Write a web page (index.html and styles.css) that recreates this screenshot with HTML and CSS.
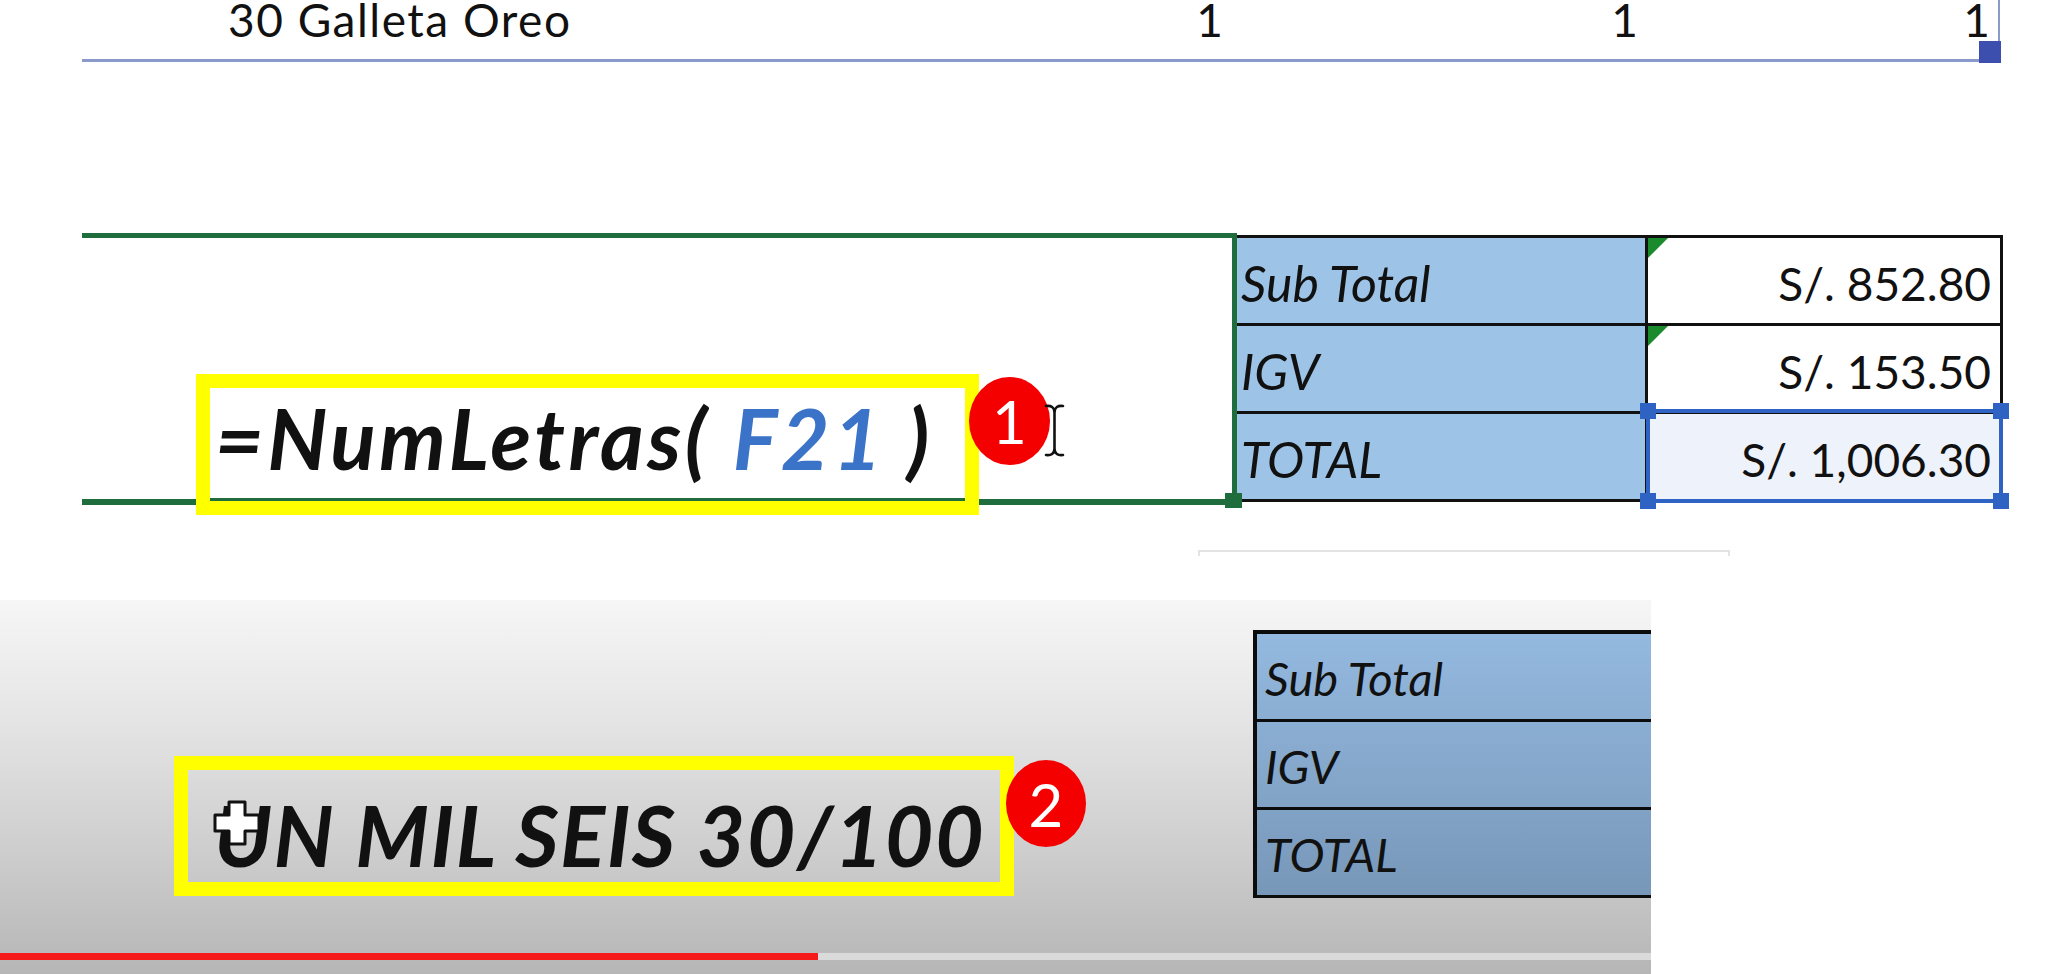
FILE: index.html
```html
<!DOCTYPE html>
<html lang="es">

<head>
    <meta charset="UTF-8">
    <meta name="viewport" content="width=device-width, initial-scale=1.0">
    <title>NumLetras</title>
    <link rel="stylesheet" href="styles.css">
</head>

<body>
    <div class="item-row">
        <div class="name">30 Galleta Oreo</div>
        <div class="num">1</div>
        <div class="num">1</div>
        <div class="num last"><span class="fill-handle"></span><span class="digit">1</span></div>
    </div>

    <div class="totals">
        <div class="merged">
            <div class="callout formula">=NumLetras( <span class="ref">F21</span> )</div>
            <span class="badge">1</span>
            <svg class="ibeam" viewBox="0 0 25 55" fill="none" stroke="#111" stroke-width="2.6" stroke-linecap="round">
                <path d="M4 3 Q12 2 12.5 9 Q13 2 21 3" />
                <path d="M12.5 9 V46" />
                <path d="M4 52 Q12 53 12.5 46 Q13 53 21 52" />
            </svg>
            <span class="corner-handle"></span>
        </div>
        <div class="summary">
            <div class="lbl">Sub Total</div>
            <div class="val flag">S/. 852.80</div>
            <div class="lbl">IGV</div>
            <div class="val flag">S/. 153.50</div>
            <div class="lbl">TOTAL</div>
            <div class="val selected">S/. 1,006.30
                <span class="frame"><i></i><i></i><i></i><i></i></span>
            </div>
        </div>
    </div>

    <div class="dropdown-edge"></div>

    <div class="player">
        <div class="stage">
            <div class="result-group">
                <div class="callout result">
                    <svg class="cross" viewBox="0 0 48 46">
                        <polygon points="16,2 32,2 32,15 46,15 46,31 32,31 32,44 16,44 16,31 2,31 2,15 16,15"
                            fill="#fff" stroke="#111" stroke-width="3" stroke-linejoin="round" />
                    </svg>
                    UN MIL SEIS 30/100
                </div>
                <span class="badge">2</span>
            </div>
            <div class="summary-copy">
                <div>Sub Total</div>
                <div>IGV</div>
                <div>TOTAL</div>
            </div>
        </div>
        <div class="progress">
            <div class="played"></div>
        </div>
    </div>
</body>

</html>
```

FILE: styles.css
```css
:root {
    --grid-blue: #8a9bcb;
    --excel-green: #1f6d3d;
    --line: #111;
    --select: #2e63c4;
}

* {
    box-sizing: border-box;
}

body {
    margin: 0;
    width: 2048px;
    height: 974px;
    overflow: hidden;
    background: #fff;
    color: #111;
    font-family: Lato, "Open Sans", sans-serif;
}

/* fila del producto (cortada arriba) */
.item-row {
    display: grid;
    grid-template-columns: 918px 227px 415px 1fr;
    margin-left: 82px;
    width: 1918px;
    height: 62px;
    border-right: 2px solid var(--grid-blue);
    border-bottom: 3px solid var(--grid-blue);
    font-size: 46px;
    line-height: 40px;
}

.item-row .name {
    padding-left: 146px;
    letter-spacing: 1.5px;
}

.item-row .num {
    text-align: right;
    padding-right: 4px;
}

.item-row .num.last {
    position: relative;
    padding-right: 8px;
}

.digit {
    position: relative;
}

.fill-handle {
    position: absolute;
    right: -3px;
    bottom: -4px;
    width: 22px;
    height: 22px;
    background: #3c4fae;
}

/* totales */
.totals {
    display: flex;
    margin-top: 171px;
    height: 272px;
}

.merged {
    position: relative;
    display: flex;
    align-items: flex-end;
    margin-left: 82px;
    width: 1155px;
    height: 272px;
    border: solid var(--excel-green);
    border-width: 5px 5px 6px 0;
}

.callout {
    border: 14px solid #ffff00;
    font-size: 84px;
    line-height: 84px;
    font-weight: 700;
    font-style: italic;
    white-space: nowrap;
}

.formula {
    position: relative;
    z-index: 1;
    flex: none;
    margin-left: 114px;
    margin-bottom: -16px;
    width: 783px;
    height: 141px;
    padding: 8px 0 0 5px;
    letter-spacing: 3.5px;
    background: #fff;
    box-shadow: inset 0 -3px 0 var(--excel-green);
}

.ref {
    color: #3b73c8;
}

.badge {
    position: relative;
    z-index: 2;
    flex: none;
    display: flex;
    align-items: center;
    justify-content: center;
    width: 81px;
    height: 88px;
    border-radius: 50%;
    background: #f50000;
    color: #fff;
    font-size: 60px;
    line-height: 1;
}

.merged .badge {
    margin: 0 0 34px -10px;
}

.ibeam {
    position: relative;
    z-index: 3;
    flex: none;
    width: 25px;
    height: 55px;
    margin: 0 0 41px -8px;
}

.corner-handle {
    position: absolute;
    right: -10px;
    bottom: -9px;
    width: 17px;
    height: 15px;
    background: var(--excel-green);
}

.summary {
    display: grid;
    grid-template-columns: 411px 352px;
    grid-auto-rows: 88px;
    align-self: flex-start;
    margin-top: 2px;
    width: 766px;
    border-top: 3px solid var(--line);
    border-right: 3px solid var(--line);
}

.lbl {
    background: #9dc3e6;
    border-right: 3px solid var(--line);
    border-bottom: 3px solid var(--line);
    padding: 20px 0 0 4px;
    font-size: 50px;
    line-height: 50px;
    font-style: italic;
}

.val {
    position: relative;
    background: #fff;
    border-bottom: 3px solid var(--line);
    padding: 23px 9px 0 0;
    text-align: right;
    font-size: 46px;
    line-height: 46px;
}

.val.flag::before {
    content: "";
    position: absolute;
    left: 0;
    top: 0;
    width: 20px;
    height: 20px;
    background: #1a8b2c;
    clip-path: polygon(0 0, 100% 0, 0 100%);
}

.val.selected {
    background: #eef2fb;
}

.frame {
    position: absolute;
    top: -5px;
    left: -2px;
    right: -3px;
    bottom: -4px;
    border: 4px solid var(--select);
}

.frame i {
    position: absolute;
    width: 16px;
    height: 16px;
    background: var(--select);
}

.frame i:nth-child(1) { left: -10px; top: -10px; }
.frame i:nth-child(2) { right: -10px; top: -10px; }
.frame i:nth-child(3) { left: -10px; bottom: -10px; }
.frame i:nth-child(4) { right: -10px; bottom: -10px; }

.dropdown-edge {
    margin: 45px 0 0 1198px;
    width: 532px;
    height: 6px;
    border: 2px solid #e3e3e3;
    border-bottom: 0;
}

/* parte de abajo: capa gris del reproductor */
.player {
    display: flex;
    flex-direction: column;
    margin-top: 44px;
    width: 1651px;
    height: 374px;
    overflow: hidden;
    background: linear-gradient(#f6f6f6 0%, #e6e6e6 30%, #cfcfcf 65%, #b6b6b6 100%);
}

.stage {
    flex: 1;
    display: flex;
    align-items: flex-start;
    min-height: 0;
}

.result-group {
    flex: none;
    display: flex;
    align-items: flex-start;
    margin: 156px 0 0 174px;
}

.result {
    position: relative;
    width: 840px;
    height: 140px;
    padding: 23px 0 0 26px;
    letter-spacing: 1.5px;
}

.result-group .badge {
    width: 80px;
    height: 87px;
    margin: 4px 0 0 -8px;
}

.cross {
    position: absolute;
    left: 25px;
    top: 30px;
    z-index: 1;
    width: 48px;
    height: 46px;
}

.summary-copy {
    flex: none;
    margin: 30px 0 0 167px;
    width: 430px;
    border-top: 4px solid #0c0c0c;
    border-left: 4px solid #0c0c0c;
    background: linear-gradient(#94b9df, #7797b8);
}

.summary-copy div {
    height: 88px;
    border-bottom: 3px solid #0c0c0c;
    padding: 21px 0 0 8px;
    font-size: 47px;
    line-height: 47px;
    font-style: italic;
}

.progress {
    flex: none;
    height: 7px;
    margin-bottom: 14px;
    background: #dadada;
}

.played {
    width: 818px;
    height: 100%;
    background: #f51b1b;
}
```
